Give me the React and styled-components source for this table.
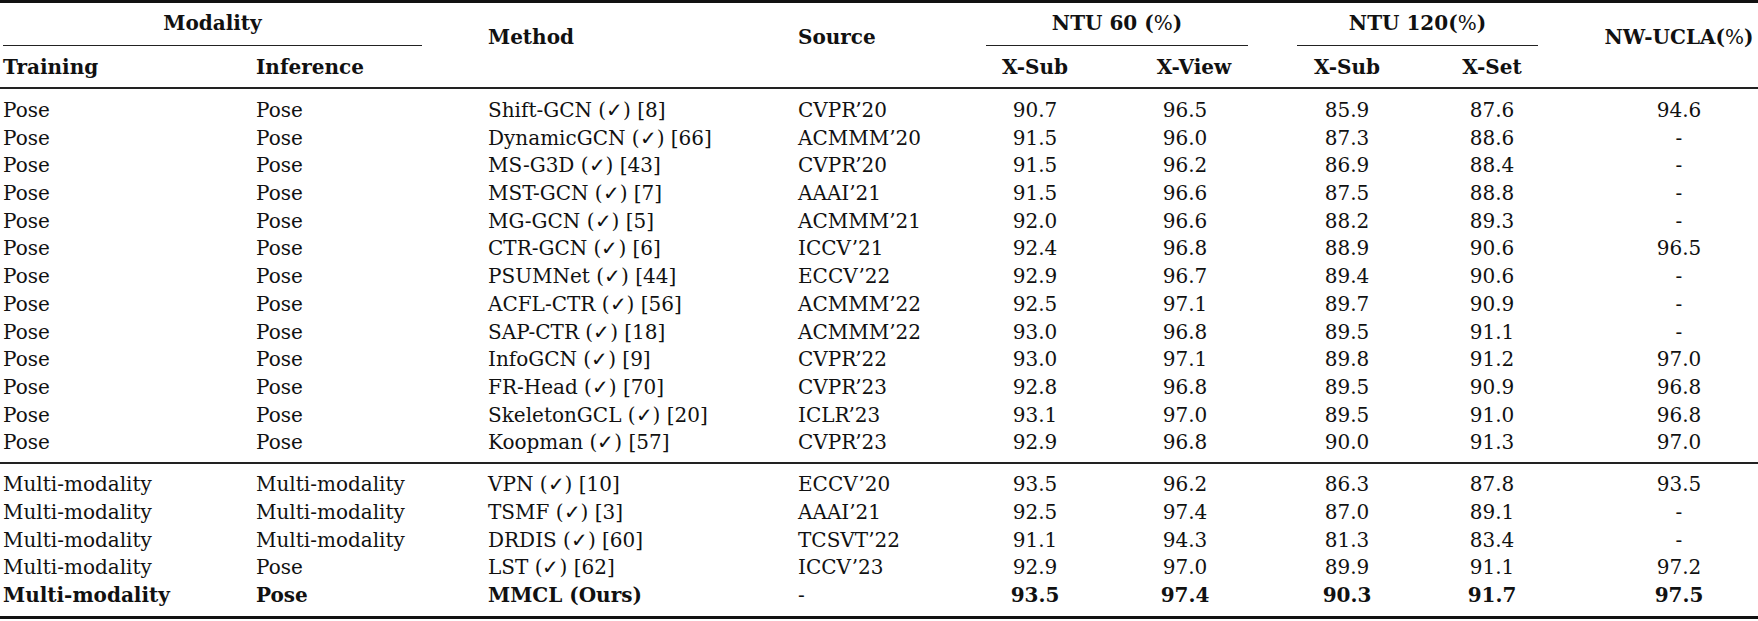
import React from 'react';
import styled, { createGlobalStyle } from 'styled-components';

const GlobalStyle = createGlobalStyle`
  html, body {
    margin: 0;
    padding: 0;
    background: #fff;
  }
  body {
    font-family: "DejaVu Serif", "Liberation Serif", serif;
    color: #111;
  }
`;

const COLS = '246px 232px 310px 182px 130px 170px 154px 136px 198px';

const columns = [
  { align: 'left', pad: 3 },
  { align: 'left', pad: 10 },
  { align: 'left', pad: 10 },
  { align: 'left', pad: 10 },
  { align: 'center', pad: 0 },
  { align: 'center', pad: 0 },
  { align: 'center', pad: 0 },
  { align: 'center', pad: 0 },
  { align: 'center', pad: 40 },
];

const Table = styled.div`
  width: 1758px;
  font-size: 20px;
  border-top: 3px solid #111;
  border-bottom: 3px solid #111;
`;

const Header = styled.div`
  display: grid;
  grid-template-columns: ${COLS};
  grid-template-rows: auto auto;
  line-height: 27.7px;
  font-weight: 700;
  border-bottom: 2px solid #222;
`;

const GroupHead = styled.div`
  grid-row: 1;
  grid-column: ${(p) => p.$cols};
  margin: 0 ${(p) => p.$right}px 0 ${(p) => p.$left}px;
  padding: 7.2px 0 6.8px;
  text-align: center;
  border-bottom: 1px solid #222;
  white-space: nowrap;
`;

const SubHead = styled.div`
  grid-row: 2;
  padding: 8.2px 0 5.3px ${(p) => p.$pad}px;
  text-align: ${(p) => p.$align};
  white-space: nowrap;
`;

const SpanHead = styled.div`
  grid-row: 1 / span 2;
  padding: 21px 0 0 ${(p) => p.$pad}px;
  text-align: ${(p) => p.$align};
  white-space: nowrap;
`;

const Thin = styled.span`
  font-weight: 400;
`;

const Body = styled.div`
  padding: ${(p) => p.$top}px 0 ${(p) => p.$bottom}px;
  border-bottom: ${(p) => (p.$rule ? '2px solid #222' : 'none')};
`;

const Row = styled.div`
  display: grid;
  grid-template-columns: ${COLS};
  line-height: 27.7px;
  font-weight: ${(p) => (p.$bold ? 700 : 400)};
`;

const Cell = styled.div`
  padding-left: ${(p) => p.$pad}px;
  text-align: ${(p) => p.$align};
  white-space: nowrap;
  font-weight: ${(p) => (p.$normal ? 400 : 'inherit')};
`;

const ck = '(\u2713)';

const poseRows = [
  [`Shift-GCN ${ck} [8]`, 'CVPR’20', '90.7', '96.5', '85.9', '87.6', '94.6'],
  [`DynamicGCN ${ck} [66]`, 'ACMMM’20', '91.5', '96.0', '87.3', '88.6', '-'],
  [`MS-G3D ${ck} [43]`, 'CVPR’20', '91.5', '96.2', '86.9', '88.4', '-'],
  [`MST-GCN ${ck} [7]`, 'AAAI’21', '91.5', '96.6', '87.5', '88.8', '-'],
  [`MG-GCN ${ck} [5]`, 'ACMMM’21', '92.0', '96.6', '88.2', '89.3', '-'],
  [`CTR-GCN ${ck} [6]`, 'ICCV’21', '92.4', '96.8', '88.9', '90.6', '96.5'],
  [`PSUMNet ${ck} [44]`, 'ECCV’22', '92.9', '96.7', '89.4', '90.6', '-'],
  [`ACFL-CTR ${ck} [56]`, 'ACMMM’22', '92.5', '97.1', '89.7', '90.9', '-'],
  [`SAP-CTR ${ck} [18]`, 'ACMMM’22', '93.0', '96.8', '89.5', '91.1', '-'],
  [`InfoGCN ${ck} [9]`, 'CVPR’22', '93.0', '97.1', '89.8', '91.2', '97.0'],
  [`FR-Head ${ck} [70]`, 'CVPR’23', '92.8', '96.8', '89.5', '90.9', '96.8'],
  [`SkeletonGCL ${ck} [20]`, 'ICLR’23', '93.1', '97.0', '89.5', '91.0', '96.8'],
  [`Koopman ${ck} [57]`, 'CVPR’23', '92.9', '96.8', '90.0', '91.3', '97.0'],
].map((r) => ['Pose', 'Pose', ...r]);

const MM = 'Multi-modality';
const multiRows = [
  [MM, MM, `VPN ${ck} [10]`, 'ECCV’20', '93.5', '96.2', '86.3', '87.8', '93.5'],
  [MM, MM, `TSMF ${ck} [3]`, 'AAAI’21', '92.5', '97.4', '87.0', '89.1', '-'],
  [MM, MM, `DRDIS ${ck} [60]`, 'TCSVT’22', '91.1', '94.3', '81.3', '83.4', '-'],
  [MM, 'Pose', `LST ${ck} [62]`, 'ICCV’23', '92.9', '97.0', '89.9', '91.1', '97.2'],
];

const ours = [MM, 'Pose', 'MMCL (Ours)', '-', '93.5', '97.4', '90.3', '91.7', '97.5'];

function DataRow({ cells, bold }) {
  return (
    <Row $bold={bold}>
      {cells.map((text, i) => (
        <Cell key={i} $align={columns[i].align} $pad={columns[i].pad} $normal={bold && i === 3}>
          {text}
        </Cell>
      ))}
    </Row>
  );
}

export default function App() {
  return (
    <>
      <GlobalStyle />
      <Table>
        <Header>
          <GroupHead $cols="1 / span 2" $left={3} $right={56}>Modality</GroupHead>
          <SubHead $align="left" $pad={3} style={{ gridColumn: 1 }}>Training</SubHead>
          <SubHead $align="left" $pad={10} style={{ gridColumn: 2 }}>Inference</SubHead>
          <SpanHead $align="left" $pad={10} style={{ gridColumn: 3 }}>Method</SpanHead>
          <SpanHead $align="left" $pad={10} style={{ gridColumn: 4 }}>Source</SpanHead>
          <GroupHead $cols="5 / span 2" $left={16} $right={22}>
            NTU 60 (<Thin>%</Thin>)
          </GroupHead>
          <SubHead $align="center" $pad={0} style={{ gridColumn: 5 }}>X-Sub</SubHead>
          <SubHead $align="center" $pad={18} style={{ gridColumn: 6 }}>X-View</SubHead>
          <GroupHead $cols="7 / span 2" $left={27} $right={22}>
            NTU 120(<Thin>%</Thin>)
          </GroupHead>
          <SubHead $align="center" $pad={0} style={{ gridColumn: 7 }}>X-Sub</SubHead>
          <SubHead $align="center" $pad={0} style={{ gridColumn: 8 }}>X-Set</SubHead>
          <SpanHead $align="center" $pad={40} style={{ gridColumn: 9 }}>
            NW-UCLA(<Thin>%</Thin>)
          </SpanHead>
        </Header>
        <Body $top={8} $bottom={4.8} $rule>
          {poseRows.map((r, i) => (
            <DataRow key={i} cells={r} />
          ))}
        </Body>
        <Body $top={7.4} $bottom={6.6}>
          {multiRows.map((r, i) => (
            <DataRow key={i} cells={r} />
          ))}
          <DataRow cells={ours} bold />
        </Body>
      </Table>
    </>
  );
}
